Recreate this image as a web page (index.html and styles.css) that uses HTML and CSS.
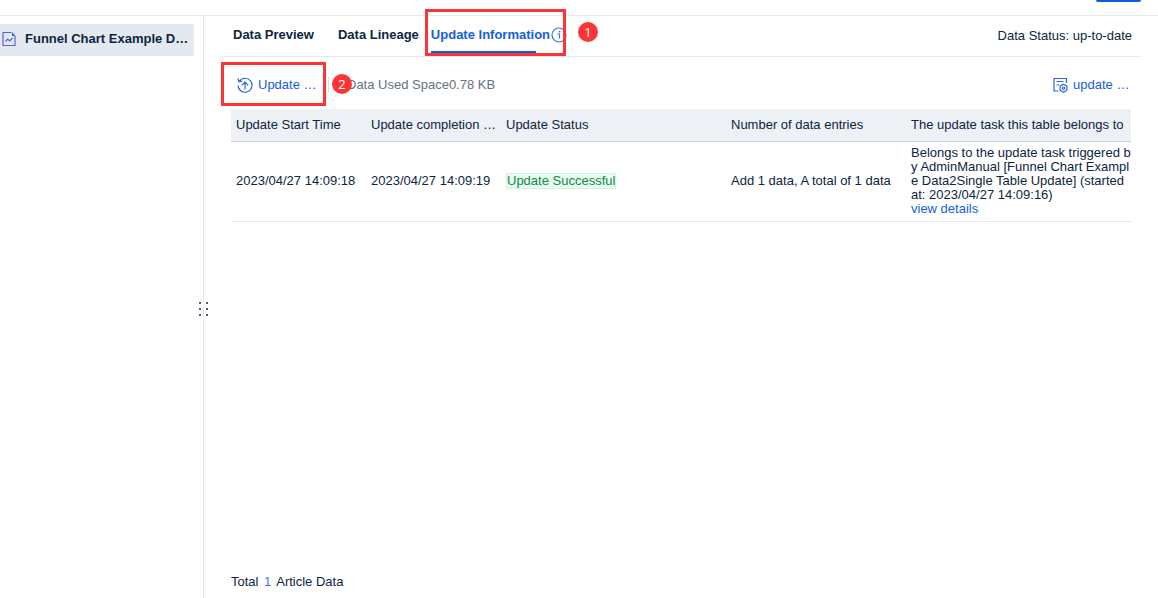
FILE: index.html
```html
<!DOCTYPE html>
<html lang="en">
<head>
<meta charset="utf-8">
<meta name="viewport" content="width=device-width, initial-scale=1">
<title>Update Information</title>
<link rel="stylesheet" href="styles.css">
</head>
<body>
<header class="topbar"><button class="topbar-action" type="button" aria-label="Save"></button></header>
<div class="workspace">
  <aside class="sidebar">
    <button class="sheet" type="button">
      <svg class="sheet-icon" viewBox="0 0 14 16" fill="none" stroke="#5a62dc" stroke-width="1.2"><path d="M9.500 1.500H1v13h12V5M3.500 10.500l2.200-2.400 2 1.800L10.500 7"/><path d="M10 1v4h3.500z" fill="#2f66e0" stroke="none"/></svg>
      <span class="clip">Funnel Chart Example Data2</span>
    </button>
  </aside>
  <div class="splitter"><span class="grip"><i></i><i></i><i></i><i></i><i></i><i></i></span></div>
  <main class="content">
    <div class="tabbar">
      <nav class="tabs">
        <button class="tab" type="button">Data Preview</button>
        <button class="tab" type="button">Data Lineage</button>
        <div class="tab-slot">
          <button class="tab tab-active" type="button">Update Information</button>
          <svg class="info-icon" viewBox="0 0 16 16" fill="none" stroke="#3b74e0" stroke-width="1.2"><circle cx="8" cy="8" r="7"/><path d="M6.500 7H8.500v4.500"/><path d="M8.500 3.800v1.700" stroke-width="1.600"/></svg>
          <span class="mark mark-tab"></span>
          <span class="badge badge-tab">1</span>
        </div>
      </nav>
      <span class="status">Data Status: up-to-date</span>
    </div>
    <div class="toolbar">
      <div class="update-slot">
        <button class="action" type="button">
          <svg class="icon" viewBox="0 0 16 16" fill="none" stroke="#2868dd" stroke-width="1.200"><path d="M2.200 4.300A7 7 0 1 1 1 8.500M1 1.500l.8 3.300 3.500-.7M8 12.500V5.200M4.800 8.300L8 5.100l3.200 3.200"/></svg>
          <span class="clip action-text">Update Data Table</span>
        </button>
        <span class="mark mark-update"></span>
        <span class="badge badge-update">2</span>
      </div>
      <span class="space">Data Used Space0.78 KB</span>
      <button class="action action-end" type="button">
        <svg class="icon" viewBox="0 0 16 16" fill="none" stroke="#2868dd" stroke-width="1.200"><path d="M6.500 14H2V1.500h12.500V6M4.500 4.500h7M4.500 8h2.500"/><path d="M11.500 7.200l3.400 2v4l-3.400 2-3.400-2v-4z"/><circle cx="11.500" cy="11.200" r="1.200"/></svg>
        <span class="clip action-text">update settings</span>
      </button>
    </div>
    <table class="records">
      <colgroup><col class="c-time"><col class="c-time"><col class="c-wide"><col class="c-count"><col class="c-wide"></colgroup>
      <thead><tr><th>Update Start Time</th><th>Update completion time</th><th>Update Status</th><th>Number of data entries</th><th>The update task this table belongs to</th></tr></thead>
      <tbody><tr>
        <td>2023/04/27 14:09:18</td><td>2023/04/27 14:09:19</td>
        <td><span class="success">Update Successful</span></td>
        <td>Add 1 data, A total of 1 data</td>
        <td class="task">Belongs to the update task triggered b<br>y AdminManual [Funnel Chart Exampl<br>e Data2Single Table Update] (started<br>at: 2023/04/27 14:09:16)<br><a class="link" href="#details">view details</a></td>
      </tr></tbody>
    </table>
    <footer class="total">Total <span class="total-count">1</span> Article Data</footer>
  </main>
</div>
</body>
</html>
```
FILE: styles.css
```css
* { box-sizing: border-box; }
body {
  margin: 0;
  height: 100vh;
  display: flex;
  flex-direction: column;
  overflow: hidden;
  background: #fff;
  color: #0c2540;
  font: 13px/14px "Liberation Sans", Arial, sans-serif;
}
button {
  font: inherit;
  color: inherit;
  background: none;
  border: 0;
  padding: 0;
  cursor: pointer;
}
svg { display: block; flex: none; }
.clip { overflow: hidden; text-overflow: ellipsis; white-space: nowrap; }

.topbar {
  flex: none;
  display: flex;
  justify-content: flex-end;
  height: 16px;
  padding-right: 17px;
  border-bottom: 1px solid #e6e9ef;
}
.topbar-action {
  width: 45px;
  height: 2px;
  background: #0b5de0;
  border-radius: 0 0 2px 2px;
}
.workspace { flex: 1; display: flex; min-height: 0; }
.sidebar { flex: none; width: 203px; padding: 8px 9px 0 0; }
.sheet {
  display: flex;
  align-items: center;
  gap: 9px;
  width: 100%;
  height: 32px;
  padding: 0 2px 3px 2px;
  background: #e4e8ef;
  font-weight: bold;
  text-align: left;
}
.sheet-icon { width: 14px; height: 16px; }

.splitter {
  flex: none;
  display: flex;
  align-items: center;
  justify-content: center;
  width: 1px;
  padding-top: 3px;
  background: #e6e8ee;
}
.grip {
  flex: none;
  display: grid;
  grid-template-columns: 2px 2px;
  gap: 4px 5px;
}
.grip i { width: 2px; height: 2px; background: #4a5b74; }

.content {
  flex: 1;
  min-width: 0;
  display: flex;
  flex-direction: column;
  padding: 0 17px 9px;
}
.tabbar {
  display: flex;
  justify-content: space-between;
  align-items: center;
  height: 41px;
  padding: 0 9px 0 12px;
  border-bottom: 1px solid #e6e9ef;
}
.tabs { display: flex; align-items: flex-start; gap: 24px; height: 100%; }
.tab { height: 37px; font-weight: bold; white-space: nowrap; }
.tab-slot {
  position: relative;
  display: flex;
  align-items: center;
  gap: 1px;
  margin-left: -12px;
}
.tab-active {
  color: #1560dc;
  background: linear-gradient(#0b5de0, #0b5de0) left bottom / 105px 2px no-repeat;
}
.info-icon { width: 16px; height: 16px; }
.status { white-space: nowrap; }

.toolbar {
  display: flex;
  align-items: center;
  height: 52px;
  padding: 4px 8px 0 16px;
}
.update-slot {
  position: relative;
  padding-right: 10px;
  border-right: 1px solid #dadde3;
}
.action {
  display: flex;
  align-items: center;
  gap: 5px;
  color: #1560dc;
  text-align: left;
}
.action-text { width: 60px; }
.action-end { margin-left: auto; }
.icon { width: 16px; height: 16px; }
.space { margin-left: 18px; color: #66717d; white-space: nowrap; }

.mark { position: absolute; border: 3px solid #fb3535; pointer-events: none; }
.mark-tab { left: -6px; top: -7px; width: 141px; height: 47px; }
.mark-update { left: -16px; top: -15px; width: 105px; height: 44px; }
.badge {
  position: absolute;
  display: flex;
  align-items: center;
  justify-content: center;
  width: 20px;
  height: 20px;
  border-radius: 50%;
  background: #fb3535;
  color: #fff;
  font-family: "Open Sans", sans-serif;
}
.badge-tab { left: 147px; top: 6px; }
.badge-update { left: 95px; top: -3px; }

.records {
  width: calc(100% - 20px);
  margin-left: 10px;
  table-layout: fixed;
  border-collapse: separate;
  border-spacing: 0;
}
.c-time { width: 15%; }
.c-wide { width: 25%; }
.c-count { width: 20%; }
.records th {
  height: 33px;
  padding: 0 3px 0 5px;
  overflow: hidden;
  text-overflow: ellipsis;
  white-space: nowrap;
  text-align: left;
  font-weight: normal;
  background: #edf0f5;
  border-bottom: 1px solid #cbd1d9;
}
.records td {
  height: 80px;
  padding: 3px 0 5px 5px;
  border-bottom: 1px solid #e6e8ec;
}
.records .task { white-space: nowrap; }
.link { color: #1560dc; text-decoration: none; }
.success {
  display: inline-block;
  color: #14874b;
  background: #e8fcf1;
  border: 1px solid #d2f4df;
}
.total { margin-top: auto; padding-left: 10px; }
.total-count { margin: 0 2px; color: #3975e5; }
```
